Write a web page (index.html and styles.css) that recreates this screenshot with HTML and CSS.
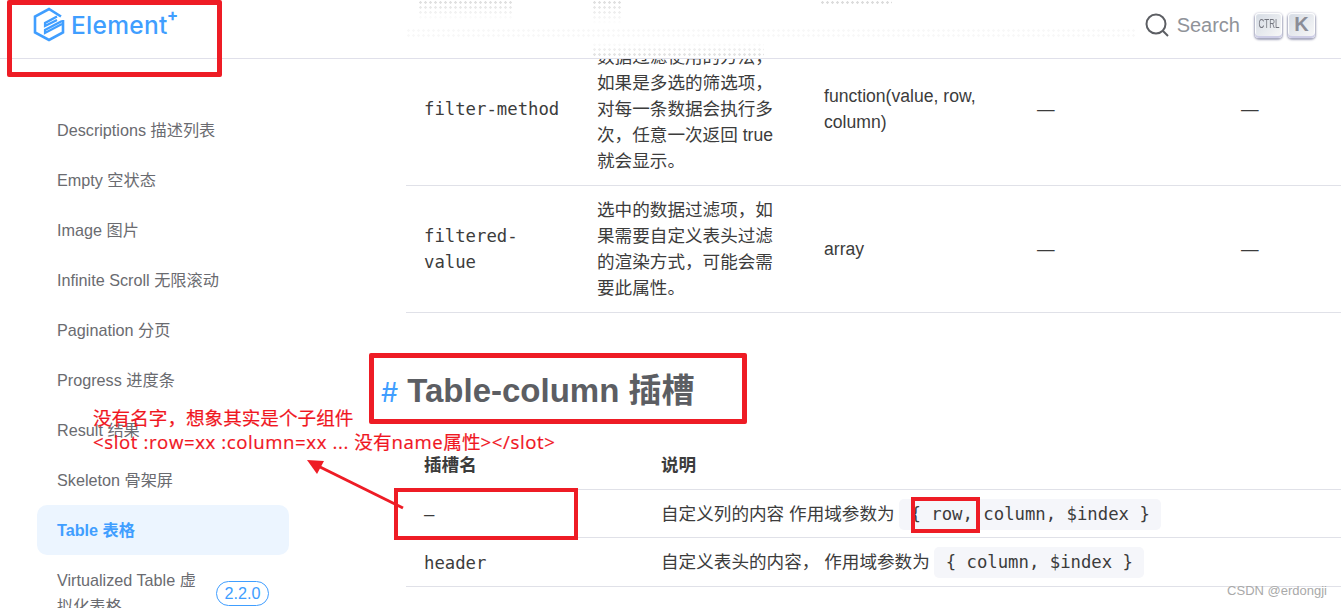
FILE: index.html
```html
<!DOCTYPE html>
<html>
<head>
    <meta charset="UTF-8">
    <title>Table 表格 | Element Plus</title>
    <link rel="stylesheet" href="styles.css">
</head>
<body>
    <header class="navbar">
        <a href="#" class="logo">
            <svg class="logo-mark" width="32" height="35" viewBox="0 0 32 35" fill="none" stroke="#409eff">
                <path d="M28 9.500 16 2 2 9.500v16L16 33l14-7.500V13" stroke-width="2.600"/>
                <path d="M24 9.500 12 16v3l12-6M29 14l-17 9v3l17-9" stroke-width="2.200"/>
            </svg>
            <span class="logo-text">Element<sup>+</sup></span>
        </a>
        <div class="search">
            <svg width="24" height="24" viewBox="0 0 24 24" fill="none" stroke="#5c5e63" stroke-width="2">
                <circle cx="11" cy="11" r="9.500"/>
                <path d="M18 18l5 5"/>
            </svg>
            <span class="search-label">Search</span>
            <kbd class="key key-ctrl"><span>CTRL</span></kbd>
            <kbd class="key">K</kbd>
        </div>
    </header>
    <div class="dots dots-a"></div>
    <div class="dots dots-b"></div>
    <div class="dots dots-c"></div>
    <div class="dots dots-d"></div>
    <div class="dots dots-e"></div>

    <div class="page">
        <aside class="sidebar">
            <ul>
                <li><a href="#">Descriptions 描述列表</a></li>
                <li><a href="#">Empty 空状态</a></li>
                <li><a href="#">Image 图片</a></li>
                <li><a href="#">Infinite Scroll 无限滚动</a></li>
                <li><a href="#">Pagination 分页</a></li>
                <li><a href="#">Progress 进度条</a></li>
                <li><a href="#">Result 结果</a></li>
                <li><a href="#">Skeleton 骨架屏</a></li>
                <li><a href="#" class="active">Table 表格</a></li>
                <li><a href="#" class="with-badge"><span class="wrap-name">Virtualized Table 虚拟化表格</span><span class="badge">2.2.0</span></a></li>
            </ul>
        </aside>
        <main class="content">
            <table class="attrs">
                <tbody>
                    <tr>
                        <td class="name"><code>filter-method</code></td>
                        <td class="desc">数据过滤使用的方法，如果是多选的筛选项，对每一条数据会执行多次，任意一次返回 true 就会显示。</td>
                        <td class="type">function(value, row, column)</td>
                        <td class="opt">—</td>
                        <td>—</td>
                    </tr>
                    <tr>
                        <td class="name"><code>filtered-value</code></td>
                        <td class="desc">选中的数据过滤项，如果需要自定义表头过滤的渲染方式，可能会需要此属性。</td>
                        <td class="type">array</td>
                        <td class="opt">—</td>
                        <td>—</td>
                    </tr>
                </tbody>
            </table>
            <h2 class="section-title"><span class="hash">#</span> Table-column 插槽</h2>
            <table class="slots">
                <thead>
                    <tr>
                        <th class="slot-name">插槽名</th>
                        <th>说明</th>
                    </tr>
                </thead>
                <tbody>
                    <tr>
                        <td><code>—</code></td>
                        <td>自定义列的内容 作用域参数为 <code class="chip">{ row, column, $index }</code></td>
                    </tr>
                    <tr>
                        <td><code>header</code></td>
                        <td>自定义表头的内容， 作用域参数为 <code class="chip">{ column, $index }</code></td>
                    </tr>
                </tbody>
            </table>
        </main>
    </div>

    <!-- annotations drawn on top of the screenshot -->
    <div class="mark mark-logo"></div>
    <div class="mark mark-title"></div>
    <div class="mark mark-slot"></div>
    <div class="mark mark-row"></div>
    <div class="note">
        <div>没有名字，想象其实是个子组件</div>
        <div class="note-code">&lt;slot :row=xx :column=xx ... <span class="note-cn">没有</span>name<span class="note-cn">属性</span>&gt;&lt;/slot&gt;</div>
    </div>
    <svg class="arrow" width="110" height="60" viewBox="0 0 110 60">
        <path d="M99 50 12 7" stroke="#ee1c25" stroke-width="3" fill="none"/>
        <path d="M3 2 20 3 13 16z" fill="#ee1c25"/>
    </svg>
    <div class="watermark">CSDN @erdongji</div>
</body>
</html>
```
FILE: styles.css
```css
html, body {
    margin: 0;
    height: 608px;
    overflow: hidden;
}
body {
    background-color: #fff;
    color: #3c3c3c;
    font-family: "Liberation Sans", "Noto Sans CJK SC", sans-serif;
    font-size: 17.6px;
    line-height: 26px;
}
code {
    font-family: "DejaVu Sans Mono", "Noto Sans CJK SC", monospace;
    font-size: 17.3px;
}

/* Top bar */
.navbar {
    position: absolute;
    top: 0;
    left: 0;
    right: 0;
    z-index: 2;
    height: 58px;
    display: flex;
    align-items: flex-start;
    justify-content: space-between;
    padding: 0 26px 0 33px;
    background-color: #fff;
    border-bottom: 1px solid #e0e0ea;
}
.logo {
    display: flex;
    align-items: center;
    gap: 6px;
    height: 49px;
    color: #409eff;
    text-decoration: none;
}
.logo-text {
    font-family: "Inter", sans-serif;
    font-size: 24.500px;
    font-weight: 500;
    letter-spacing: 0.3px;
}
.logo-text sup {
    font-size: 17px;
    font-weight: bold;
    line-height: 0;
    position: relative;
    top: -3px;
    left: -1px;
    vertical-align: super;
}
.search {
    display: flex;
    align-items: center;
    height: 50px;
}
.search-label {
    color: #909399;
    font-size: 20px;
    margin: 0 15px 0 8px;
}
.key {
    box-sizing: border-box;
    width: 27px;
    height: 25px;
    margin-right: 6px;
    display: flex;
    align-items: center;
    justify-content: center;
    border-radius: 4px;
    background: linear-gradient(-225deg, #d5dbe4, #f8f8f8);
    box-shadow: inset 0 -2px 0 0 #cdcde6, inset 0 0 1px 1px #fff, 0 1px 2px 1px rgba(30, 35, 90, 0.4);
    color: #8b8d97;
    font-family: "Liberation Sans", sans-serif;
    font-size: 20px;
    font-weight: bold;
    padding-bottom: 3px;
}
.key:last-child {
    margin-right: 0;
}
.key-ctrl {
    font-size: 13px;
    color: #74767f;
}
.key-ctrl span {
    display: block;
    font-weight: normal;
    transform: scaleX(0.62);
}

/* Blurred text showing through the bar */
.dots {
    position: absolute;
    z-index: 3;
    background-image: radial-gradient(circle, #dcdcdc 1px, transparent 1.500px);
    background-size: 5px 5px;
}
.dots-a {
    left: 418px;
    top: 0;
    width: 94px;
    height: 20px;
    -webkit-mask-image: linear-gradient(#000, transparent);
}
.dots-b {
    left: 592px;
    top: 0;
    width: 30px;
    height: 24px;
    -webkit-mask-image: linear-gradient(#000, transparent);
}
.dots-c {
    left: 820px;
    top: 0;
    width: 72px;
    height: 5px;
}
.dots-d {
    left: 592px;
    top: 42px;
    width: 172px;
    height: 16px;
    -webkit-mask-image: linear-gradient(transparent, #000);
}
.dots-e {
    left: 406px;
    top: 28px;
    width: 730px;
    height: 10px;
    opacity: 0.2;
}

/* Layout */
.page {
    display: grid;
    grid-template-columns: 406px 935px;
}

/* Side menu */
.sidebar {
    padding: 105px 0 0 37px;
}
.sidebar ul {
    list-style: none;
    margin: 0;
    padding: 0;
    width: 252px;
}
.sidebar a {
    display: block;
    padding: 12px 20px;
    border-radius: 10px;
    color: #6a6b70;
    font-size: 16.200px;
    text-decoration: none;
}
.sidebar a.active {
    background-color: #ecf5ff;
    color: #409eff;
    font-weight: bold;
}
.sidebar a.with-badge {
    display: flex;
    align-items: center;
    gap: 17px;
    padding-right: 20px;
}
.wrap-name {
    width: 142px;
    flex: none;
}
.badge {
    box-sizing: border-box;
    width: 53px;
    height: 25px;
    border: 1px solid #409eff;
    border-radius: 13px;
    color: #409eff;
    line-height: 23px;
    text-align: center;
}

/* Tables */
.content {
    padding-top: 33px;
}
table {
    width: 935px;
    border-collapse: collapse;
    table-layout: fixed;
}
td, th {
    padding: 11px 16px 11px 18px;
    border-bottom: 1px solid #e0e1e8;
    text-align: left;
    word-break: normal;
}
.attrs .name {
    width: 139px;
}
.attrs .desc {
    width: 193px;
}
.attrs .type {
    width: 179px;
}
.attrs .opt {
    width: 170px;
}
.slots th {
    font-weight: bold;
    padding: 11px 18px;
}
.slots .slot-name {
    width: 201px;
}
.slots td {
    padding: 9px 18px 7px;
}
.slots tr:last-child td {
    padding-bottom: 8px;
}
.chip {
    display: inline-block;
    height: 31px;
    line-height: 31px;
    margin-left: -1px;
    padding: 0 11px 0 12px;
    border-radius: 5px;
    background-color: #f5f6fa;
}
.section-title {
    margin: 57px 0 27px -25px;
    color: #5c5e63;
    font-size: 33px;
    line-height: 42px;
    font-weight: bold;
}
.hash {
    color: #409eff;
    font-family: "Inter", sans-serif;
    font-weight: 400;
    font-size: 27px;
}

/* Annotations */
.mark {
    position: absolute;
    z-index: 4;
    box-sizing: border-box;
    border: 4px solid #ee1c25;
    border-radius: 2px;
}
.mark-logo {
    left: 7px;
    top: 0;
    width: 215px;
    height: 77px;
    border-width: 5px;
}
.mark-title {
    left: 369px;
    top: 353px;
    width: 378px;
    height: 71px;
    border-width: 5px;
}
.mark-slot {
    left: 394px;
    top: 488px;
    width: 184px;
    height: 52px;
    border-radius: 0;
}
.mark-row {
    left: 911px;
    top: 497px;
    width: 69px;
    height: 36px;
    border-radius: 0;
}
.note {
    position: absolute;
    z-index: 4;
    left: 93px;
    top: 406px;
    color: #f0161f;
    font-family: "Open Sans", "Noto Sans CJK SC", sans-serif;
    font-size: 18.600px;
    line-height: 24px;
    -webkit-text-stroke: 0.2px #f0161f;
}
.note-code {
    letter-spacing: 0.6px;
}
.note-cn {
    letter-spacing: 0;
}
.arrow {
    position: absolute;
    z-index: 4;
    left: 304px;
    top: 458px;
}
.watermark {
    position: absolute;
    z-index: 4;
    right: 14px;
    top: 582px;
    color: #a9a9a9;
    font-size: 13px;
    line-height: 18px;
}
```
